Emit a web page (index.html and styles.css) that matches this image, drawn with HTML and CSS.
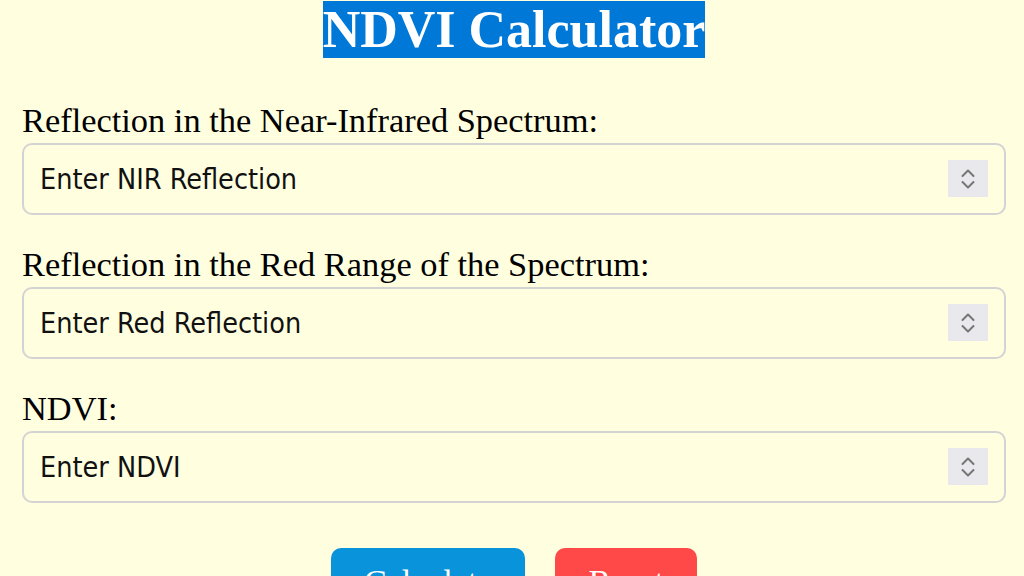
FILE: index.html
```html
<!DOCTYPE html>
<html lang="en">
<head>
    <meta charset="UTF-8">
    <meta name="viewport" content="width=device-width, initial-scale=1.0">
    <link rel="stylesheet" href="styles.css">
    <title>NDVI Calculator</title>
</head>
<body>
    <div class="calculator">
        <!-- Title -->
        <h1 class="title"><span class="title-text">NDVI Calculator</span></h1>

        <div class="field">
            <label class="field-label" for="nir">Reflection in the Near-Infrared Spectrum:</label>
            <div class="input-wrap">
                <input class="field-input" type="text" id="nir" placeholder="Enter NIR Reflection">
                <span class="spinner">
                    <svg width="18" height="30" viewBox="0 0 18 30"><path d="M3.5 12 L9 6.5 L14.5 12 M3.5 18 L9 23.5 L14.5 18" fill="none" stroke="#767676" stroke-width="2" stroke-linecap="round" stroke-linejoin="round"/></svg>
                </span>
            </div>
        </div>

        <div class="field">
            <label class="field-label" for="red">Reflection in the Red Range of the Spectrum:</label>
            <div class="input-wrap">
                <input class="field-input" type="text" id="red" placeholder="Enter Red Reflection">
                <span class="spinner">
                    <svg width="18" height="30" viewBox="0 0 18 30"><path d="M3.5 12 L9 6.5 L14.5 12 M3.5 18 L9 23.5 L14.5 18" fill="none" stroke="#767676" stroke-width="2" stroke-linecap="round" stroke-linejoin="round"/></svg>
                </span>
            </div>
        </div>

        <div class="field">
            <label class="field-label" for="ndvi">NDVI:</label>
            <div class="input-wrap">
                <input class="field-input" type="text" id="ndvi" placeholder="Enter NDVI">
                <span class="spinner">
                    <svg width="18" height="30" viewBox="0 0 18 30"><path d="M3.5 12 L9 6.5 L14.5 12 M3.5 18 L9 23.5 L14.5 18" fill="none" stroke="#767676" stroke-width="2" stroke-linecap="round" stroke-linejoin="round"/></svg>
                </span>
            </div>
        </div>

        <!-- Buttons -->
        <div class="buttons">
            <button class="btn btn-calc">Calculate</button>
            <button class="btn btn-reset">Reset</button>
        </div>
    </div>
</body>
</html>
```

FILE: styles.css
```css
/* Reset */
body, h1 {
    margin: 0;
    padding: 0;
}

body {
    background-color: #ffffe0;
    font-family: "Liberation Serif", "Times New Roman", serif;
    overflow: hidden;
}

.calculator {
    margin: 0 18px 0 22px;
}

/* Title */
.title {
    margin-top: 0;
    margin-bottom: 41px;
    text-align: center;
    font-size: 52px;
    font-weight: bold;
    line-height: 60px;
}

.title-text {
    background-color: #0078d7;
    color: #fff;
}

/* Fields */
.field {
    margin-bottom: 30px;
}

.field-label {
    display: block;
    font-size: 34.4px;
    line-height: 39px;
    color: #000;
    margin-bottom: 3px;
}

.input-wrap {
    position: relative;
}

.field-input {
    display: block;
    width: 100%;
    height: 72px;
    box-sizing: border-box;
    padding: 0 16px;
    border: 2px solid #d3d3d3;
    border-radius: 10px;
    background-color: #ffffe0;
    font-family: "DejaVu Sans Condensed", "DejaVu Sans", sans-serif;
    font-size: 28.5px;
    color: #111;
    outline: none;
}

.field-input::placeholder {
    color: #111;
    opacity: 1;
}

/* Spin buttons drawn over the input */
.spinner {
    position: absolute;
    top: 17px;
    right: 18px;
    width: 40px;
    height: 37px;
    background-color: #e9e9ed;
    display: flex;
    align-items: center;
    justify-content: center;
}

/* Buttons */
.buttons {
    display: flex;
    justify-content: center;
    gap: 30px;
    margin-top: 45px;
}

.btn {
    font-family: "Liberation Serif", "Times New Roman", serif;
    font-size: 34px;
    line-height: 39px;
    color: #fff;
    border: none;
    border-radius: 10px;
    padding: 14px 33px 10px;
    cursor: pointer;
}

.btn-calc {
    background-color: #0993db;
}

.btn-reset {
    background-color: #ff4848;
}
```
